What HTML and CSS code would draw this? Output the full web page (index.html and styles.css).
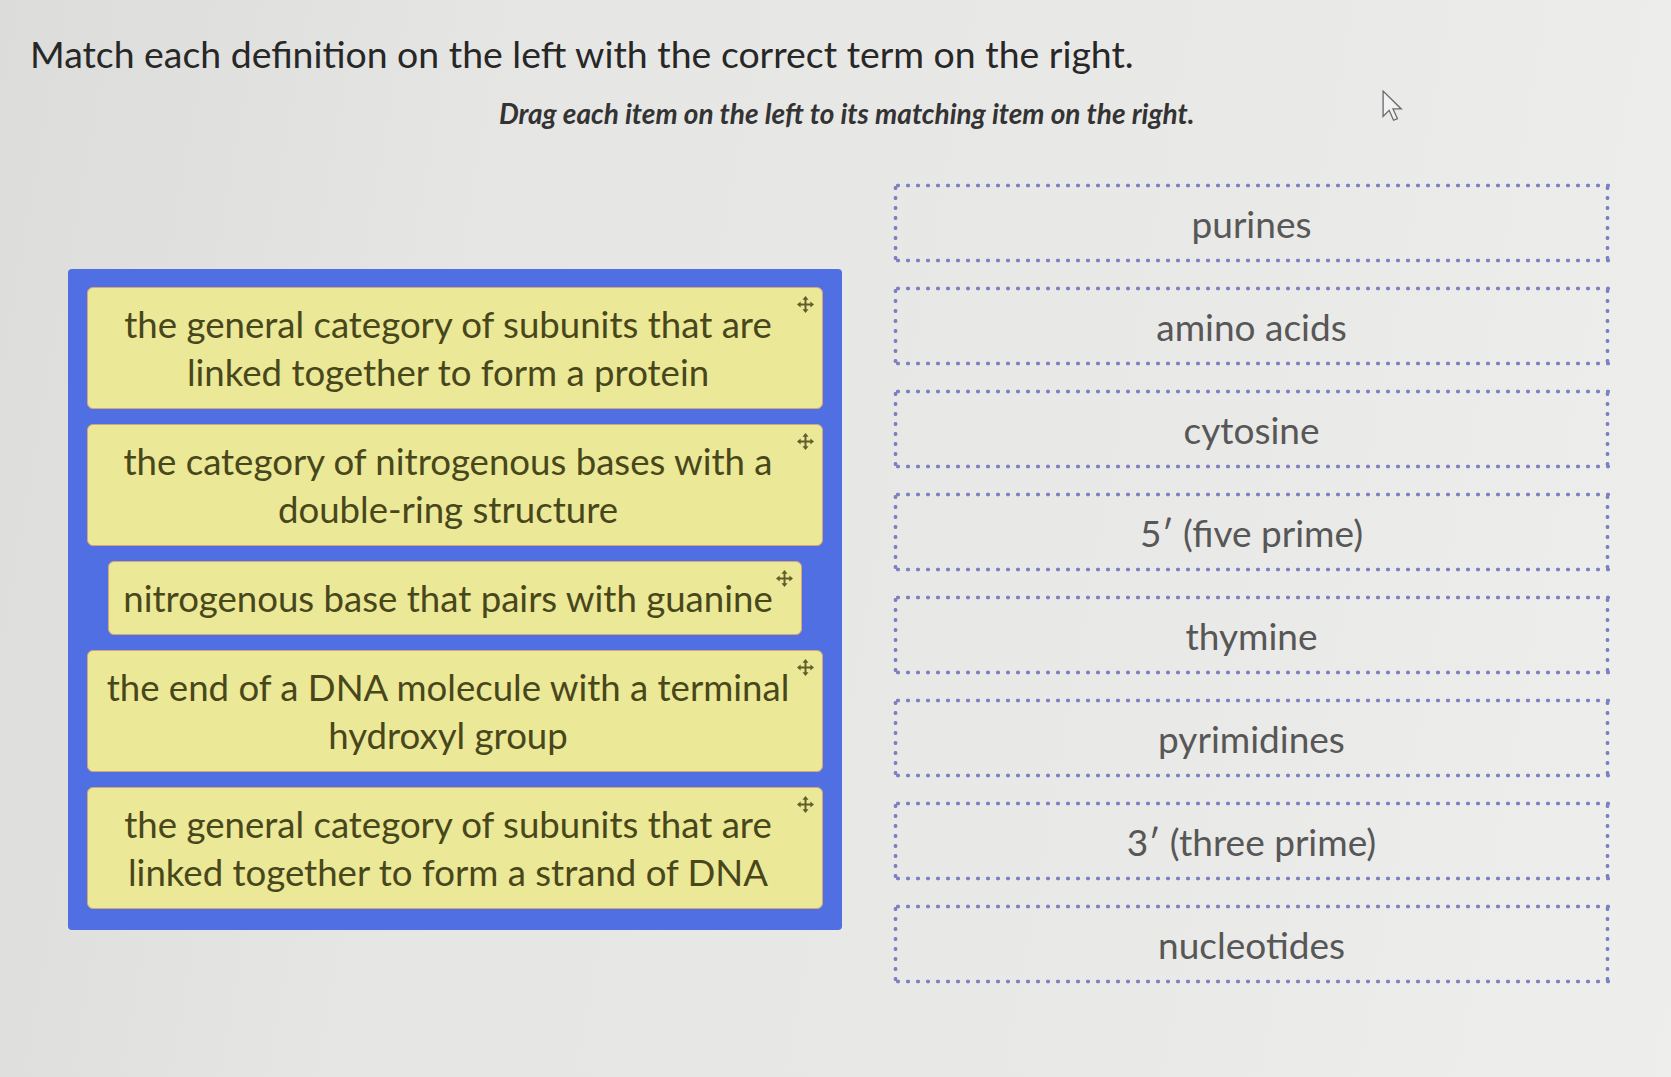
FILE: index.html
```html
<!DOCTYPE html>
<html lang="en">
<head>
  <meta charset="UTF-8" />
  <title>Matching: DNA and Proteins</title>
  <link rel="stylesheet" href="styles.css">
</head>
<body>
  <div class="page">
    <h1 class="prompt">Match each definition on the left with the correct term on the right.</h1>
    <p class="hint">Drag each item on the left to its matching item on the right.</p>

    <div class="board">
      <div class="sources">
        <div class="card">
          <span>the general category of subunits that are linked together to form a protein</span>
          <svg class="grip" viewBox="0 0 14 14"><path d="M7 0 L9.5 3 H7.8 V6.2 H11 V4.5 L14 7 L11 9.5 V7.8 H7.8 V11 H9.5 L7 14 L4.5 11 H6.2 V7.8 H3 V9.5 L0 7 L3 4.5 V6.2 H6.2 V3 H4.5 Z"/></svg>
        </div>
        <div class="card">
          <span>the category of nitrogenous bases with a double-ring structure</span>
          <svg class="grip" viewBox="0 0 14 14"><path d="M7 0 L9.5 3 H7.8 V6.2 H11 V4.5 L14 7 L11 9.5 V7.8 H7.8 V11 H9.5 L7 14 L4.5 11 H6.2 V7.8 H3 V9.5 L0 7 L3 4.5 V6.2 H6.2 V3 H4.5 Z"/></svg>
        </div>
        <div class="card">
          <span>nitrogenous base that pairs with guanine</span>
          <svg class="grip" viewBox="0 0 14 14"><path d="M7 0 L9.5 3 H7.8 V6.2 H11 V4.5 L14 7 L11 9.5 V7.8 H7.8 V11 H9.5 L7 14 L4.5 11 H6.2 V7.8 H3 V9.5 L0 7 L3 4.5 V6.2 H6.2 V3 H4.5 Z"/></svg>
        </div>
        <div class="card">
          <span>the end of a DNA molecule with a terminal hydroxyl group</span>
          <svg class="grip" viewBox="0 0 14 14"><path d="M7 0 L9.5 3 H7.8 V6.2 H11 V4.5 L14 7 L11 9.5 V7.8 H7.8 V11 H9.5 L7 14 L4.5 11 H6.2 V7.8 H3 V9.5 L0 7 L3 4.5 V6.2 H6.2 V3 H4.5 Z"/></svg>
        </div>
        <div class="card">
          <span>the general category of subunits that are linked together to form a strand of DNA</span>
          <svg class="grip" viewBox="0 0 14 14"><path d="M7 0 L9.5 3 H7.8 V6.2 H11 V4.5 L14 7 L11 9.5 V7.8 H7.8 V11 H9.5 L7 14 L4.5 11 H6.2 V7.8 H3 V9.5 L0 7 L3 4.5 V6.2 H6.2 V3 H4.5 Z"/></svg>
        </div>
      </div>

      <div class="targets">
        <div class="slot">purines</div>
        <div class="slot">amino acids</div>
        <div class="slot">cytosine</div>
        <div class="slot">5′ (five prime)</div>
        <div class="slot">thymine</div>
        <div class="slot">pyrimidines</div>
        <div class="slot">3′ (three prime)</div>
        <div class="slot">nucleotides</div>
      </div>
    </div>

    <!-- mouse pointer resting near the instructions -->
    <svg class="pointer" viewBox="0 0 20 30"><path d="M1 1 L1 24 L6.5 18.5 L10.5 27.5 L14 26 L10 17.2 L17.5 17.2 Z"/></svg>
  </div>
</body>
</html>
```

FILE: styles.css
```css
* {
  margin: 0;
  padding: 0;
  box-sizing: border-box;
}

body {
  font-family: Lato, "Open Sans", sans-serif;
  background: linear-gradient(100deg, #dcdcda 0%, #e6e6e4 30%, #e9e9e7 70%, #eeeeec 100%);
  color: #2d2d2d;
  min-height: 1077px;
}

.page {
  position: relative;
  padding: 32px 0 0 30px;
}

.prompt {
  font-size: 37.4px;
  font-weight: 400;
  line-height: 44px;
  color: #272727;
}

.hint {
  margin: 20px 0 0 469px;
  font-size: 28px;
  font-weight: 700;
  font-style: italic;
  color: #333;
}

.board {
  display: flex;
  align-items: flex-start;
  margin-top: 53px;
  margin-left: 38px;
}

/* blue tray with the draggable definitions */
.sources {
  width: 774px;
  margin-top: 86px;
  padding: 18px 15px 21px;
  background: #4f6fe2;
  border-radius: 4px;
  display: flex;
  flex-direction: column;
  align-items: center;
  gap: 15px;
}

.card {
  position: relative;
  width: fit-content;
  max-width: 736px;
  padding: 12px 28px 12px 14px;
  background: #ebe897;
  border: 1px solid #d9a577;
  border-radius: 6px;
  font-size: 36.6px;
  line-height: 48px;
  text-align: center;
  color: #48471b;
}

.grip {
  position: absolute;
  top: 8px;
  right: 8px;
  width: 17px;
  height: 17px;
  fill: #5f5e2a;
}

/* dotted drop zones */
.targets {
  width: 717px;
  margin-left: 51px;
  display: flex;
  flex-direction: column;
  gap: 23px;
}

.slot {
  height: 80px;
  display: flex;
  align-items: center;
  justify-content: center;
  font-size: 37px;
  color: #575757;
  background:
    radial-gradient(circle, #7d81c3 1.7px, transparent 2.2px) 0 0 / 10px 5px repeat-x,
    radial-gradient(circle, #7d81c3 1.7px, transparent 2.2px) 0 100% / 10px 5px repeat-x,
    radial-gradient(circle, #7d81c3 1.7px, transparent 2.2px) 0 0 / 5px 10px repeat-y,
    radial-gradient(circle, #7d81c3 1.7px, transparent 2.2px) 100% 0 / 5px 10px repeat-y;
}

.pointer {
  position: absolute;
  left: 1382px;
  top: 90px;
  width: 22px;
  height: 33px;
  fill: #f2f2f2;
  stroke: #6a6a6a;
  stroke-width: 1.2;
}
```
